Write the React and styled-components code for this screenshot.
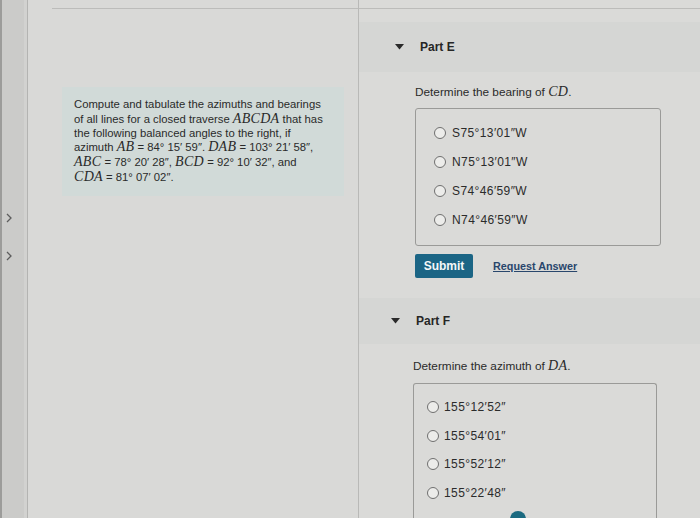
import React from "react";
import styled, { createGlobalStyle } from "styled-components";

const Global = createGlobalStyle`
  html, body { margin: 0; padding: 0; }
  body {
    width: 700px; height: 518px; overflow: hidden;
    background: #d9d9d7;
    font-family: "Liberation Sans", Arial, sans-serif;
    color: #2b2b2b;
  }
`;

const Page = styled.div`
  display: flex;
  width: 700px;
  height: 518px;
  position: relative;
  overflow: hidden;
`;

const Rail = styled.div`
  width: 27px;
  flex: none;
  background: #cbcbc9;
  border-left: 2px solid #9c9c9a;
  border-right: 3px solid #d2d2d0;
  box-shadow: 1px 0 0 #b4b4b2;
  display: flex;
  flex-direction: column;
  align-items: flex-start;
  padding-top: 212px;
  gap: 26px;
  box-sizing: border-box;
  padding-left: 3px;
`;

const Chevron = () => (
  <svg width="8" height="12" viewBox="0 0 8 12">
    <path d="M2 2 L6 6 L2 10" fill="none" stroke="#5d5d5d" strokeWidth="1.3" />
  </svg>
);

const LeftCol = styled.div`
  width: 330px;
  flex: none;
  margin-left: 1px;
  border-right: 1px solid #b9b9b7;
  display: flex;
  flex-direction: column;
  & > * { flex-shrink: 0; }
`;

const TopRule = styled.div`
  margin-top: 8px;
  margin-left: ${(p) => p.$inset || 0}px;
  border-top: 1px solid #bcbcba;
`;

const Problem = styled.div`
  margin: 78px 0 0 34px;
  width: 282px;
  height: 109px;
  box-sizing: border-box;
  background: #d1dad8;
  padding: 11px 4px 0 12px;
  font-size: 11.3px;
  line-height: 13.8px;
  color: #2a2a2a;
  white-space: nowrap;
  overflow: hidden;
`;

const M = styled.span`
  font-family: "Liberation Serif", "Times New Roman", serif;
  font-style: italic;
  font-size: ${(p) => p.$size || 14}px;
  letter-spacing: 0.3px;
`;

const RightCol = styled.div`
  flex: 1;
  display: flex;
  flex-direction: column;
  background: #dadad8;
  & > * { flex-shrink: 0; }
`;

const PartHeader = styled.div`
  display: flex;
  align-items: center;
  height: ${(p) => p.$h}px;
  margin-top: ${(p) => p.$mt}px;
  padding-left: ${(p) => p.$pl}px;
  background: #d5d6d4;
  gap: ${(p) => p.$gap}px;
  font-weight: bold;
  font-size: 12px;
  color: #262626;
`;

const Caret = () => (
  <svg width="9" height="6" viewBox="0 0 9 6">
    <path d="M0 0 L9 0 L4.5 5.5 Z" fill="#2a2a2a" />
  </svg>
);

const Body = styled.div`
  padding-left: ${(p) => p.$pl}px;
  display: flex;
  flex-direction: column;
  & > * { flex-shrink: 0; }
`;

const Question = styled.div`
  margin-top: ${(p) => p.$mt}px;
  font-size: 11.8px;
  line-height: 14px;
  color: #2a2a2a;
`;

const Choices = styled.div`
  margin-top: ${(p) => p.$mt}px;
  width: ${(p) => p.$w}px;
  height: ${(p) => p.$h}px;
  box-sizing: border-box;
  border: 1px solid #9a9a98;
  border-bottom-width: ${(p) => (p.$open ? 0 : 1)}px;
  border-radius: 3px;
  padding: ${(p) => p.$pt}px 0 0 ${(p) => p.$pl}px;
  display: flex;
  flex-direction: column;
  gap: ${(p) => p.$gap}px;
`;

const Choice = styled.label`
  display: flex;
  align-items: center;
  gap: ${(p) => p.$gap}px;
  height: 14px;
  font-size: 12px;
  letter-spacing: 0.4px;
  color: #2b2b2b;
`;

const Radio = styled.span`
  width: 10px;
  height: 10px;
  border-radius: 50%;
  border: 1px solid #6f6f6f;
  background: #ececea;
  flex: none;
`;

const Actions = styled.div`
  margin-top: 8px;
  display: flex;
  align-items: center;
  gap: 20px;
`;

const Submit = styled.button`
  width: 58px;
  height: 24px;
  border: none;
  border-radius: 2px;
  background: #1b6585;
  color: #f4f7f8;
  font-family: "Liberation Sans", Arial, sans-serif;
  font-weight: bold;
  font-size: 12px;
  padding: 0;
`;

const Link = styled.a`
  color: #29466c;
  font-weight: bold;
  font-size: 10.8px;
  text-decoration: underline;
`;

const Spinner = styled.div`
  position: absolute;
  left: 510px;
  top: 511px;
  width: 16px;
  height: 16px;
  border-radius: 50%;
  background: #1b6a80;
`;

const optsE = ["S75°13′01″W", "N75°13′01″W", "S74°46′59″W", "N74°46′59″W"];
const optsF = ["155°12′52″", "155°54′01″", "155°52′12″", "155°22′48″"];

export default function App() {
  return (
    <>
      <Global />
      <Page>
        <Rail>
          <Chevron />
          <Chevron />
        </Rail>
        <LeftCol>
          <TopRule $inset={24} />
          <Problem>
            Compute and tabulate the azimuths and bearings
            <br />
            of all lines for a closed traverse <M>ABCDA</M> that has
            <br />
            the following balanced angles to the right, if
            <br />
            azimuth <M>AB</M> = 84° 15′ 59″. <M>DAB</M> = 103° 21′ 58″,
            <br />
            <M>ABC</M> = 78° 20′ 28″, <M>BCD</M> = 92° 10′ 32″, and
            <br />
            <M>CDA</M> = 81° 07′ 02″.
          </Problem>
        </LeftCol>
        <RightCol>
          <TopRule />
          <PartHeader $h={50} $mt={13} $pl={36} $gap={16}>
            <Caret />
            Part E
          </PartHeader>
          <Body $pl={56}>
            <Question $mt={13}>
              Determine the bearing of <M $size={14}>CD</M>.
            </Question>
            <Choices $mt={9} $w={246} $h={138} $pt={17} $pl={18} $gap={15}>
              {optsE.map((o) => (
                <Choice key={o} $gap={6}>
                  <Radio />
                  {o}
                </Choice>
              ))}
            </Choices>
            <Actions>
              <Submit>Submit</Submit>
              <Link>Request Answer</Link>
            </Actions>
          </Body>
          <PartHeader $h={46} $mt={20} $pl={32} $gap={16}>
            <Caret />
            Part F
          </PartHeader>
          <Body $pl={54}>
            <Question $mt={15}>
              Determine the azimuth of <M $size={14}>DA</M>.
            </Question>
            <Choices $mt={10} $w={244} $h={200} $pt={16} $pl={13} $gap={14.5} $open>
              {optsF.map((o) => (
                <Choice key={o} $gap={5}>
                  <Radio />
                  {o}
                </Choice>
              ))}
            </Choices>
          </Body>
        </RightCol>
        <Spinner />
      </Page>
    </>
  );
}
